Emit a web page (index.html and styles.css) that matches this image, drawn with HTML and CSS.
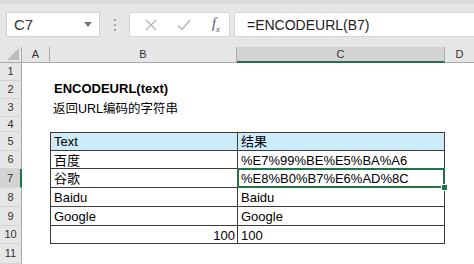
FILE: index.html
```html
<html>
<head>
    <title>ENCODEURL</title>
    <link rel="stylesheet" href="styles.css">
</head>
<body>
    <div class="toolbar">
        <div class="namebox">
            <span>C7</span>
            <svg class="caret" width="8" height="5" viewBox="0 0 8 5"><path d="M0 0h8L4 5z" fill="#777"/></svg>
        </div>
        <div class="dots"><i></i><i></i><i></i></div>
        <div class="fxbox">
            <svg width="12" height="12" viewBox="0 0 12 12"><path d="M1 1l10 10M11 1L1 11" stroke="#b4b4b4" stroke-width="1.3" fill="none"/></svg>
            <svg width="14" height="12" viewBox="0 0 14 12"><path d="M1 6.5l4 4L13 1" stroke="#b4b4b4" stroke-width="1.4" fill="none"/></svg>
            <span class="fx">f<sub>x</sub></span>
        </div>
        <div class="formula">=ENCODEURL(B7)</div>
    </div>

    <div class="sheet">
        <div class="corner"><svg width="12" height="12" viewBox="0 0 12 12"><path d="M12 0v12H0z" fill="#bdbdbd"/></svg></div>
        <div class="colhdr">A</div>
        <div class="colhdr">B</div>
        <div class="colhdr active">C</div>
        <div class="colhdr last">D</div>

        <div class="rowhdr">1</div><div></div><div></div><div></div><div></div>
        <div class="rowhdr">2</div><div></div><div class="title">ENCODEURL(text)</div><div></div><div></div>
        <div class="rowhdr">3</div><div></div><div class="note">返回URL编码的字符串</div><div></div><div></div>
        <div class="rowhdr">4</div><div></div><div></div><div></div><div></div>

        <div class="rowhdr">5</div><div></div>
        <div class="cell b head">Text</div><div class="cell c head">结果</div><div></div>

        <div class="rowhdr">6</div><div></div>
        <div class="cell b">百度</div><div class="cell c">%E7%99%BE%E5%BA%A6</div><div></div>

        <div class="rowhdr active">7</div><div></div>
        <div class="cell b">谷歌</div><div class="cell c selected">%E8%B0%B7%E6%AD%8C<span class="handle"></span></div><div></div>

        <div class="rowhdr">8</div><div></div>
        <div class="cell b">Baidu</div><div class="cell c">Baidu</div><div></div>

        <div class="rowhdr">9</div><div></div>
        <div class="cell b">Google</div><div class="cell c">Google</div><div></div>

        <div class="rowhdr">10</div><div></div>
        <div class="cell b num">100</div><div class="cell c">100</div><div></div>

        <div class="rowhdr">11</div><div></div><div></div><div></div><div></div>
    </div>
</body>
</html>
```

FILE: styles.css
```css
body {
    margin: 0;
    width: 474px;
    height: 264px;
    overflow: hidden;
    background: #ffffff;
    font-family: "Liberation Sans", "Noto Sans CJK SC", sans-serif;
}

.toolbar {
    height: 47px;
    box-sizing: border-box;
    padding: 12px 0 10px 6px;
    background: #e6e6e6;
    border-top: 4px solid #dadada;
    display: flex;
    align-items: stretch;
}

.namebox {
    width: 94px;
    box-sizing: border-box;
    background: white;
    border: 1px solid #d0d0d0;
    display: flex;
    align-items: center;
    justify-content: space-between;
    padding: 0 7px 0 7px;
    font-size: 15px;
    color: #333;
    margin-top: -4px;
}

.dots {
    width: 29px;
    display: flex;
    flex-direction: column;
    align-items: center;
    justify-content: center;
    gap: 3px;
    margin-top: -4px;
}

.dots i {
    width: 2px;
    height: 2px;
    background: #a8a8a8;
}

.fxbox {
    width: 101px;
    box-sizing: border-box;
    background: white;
    border: 1px solid #d6d6d6;
    display: flex;
    align-items: center;
    padding: 0 8px 0 15px;
    gap: 20px;
    margin-top: -4px;
}

.fx {
    font-family: "Liberation Serif", serif;
    font-style: italic;
    font-size: 14px;
    color: #555;
    margin-left: 1px;
}

.fx sub {
    font-size: 9px;
}

.formula {
    flex: 1;
    margin-left: 4px;
    background: white;
    border: 1px solid #d6d6d6;
    border-right: none;
    display: flex;
    align-items: center;
    padding-left: 12px;
    font-size: 14px;
    color: #222;
    margin-top: -4px;
}

.sheet {
    display: grid;
    grid-template-columns: 22px 28px 187px 208px 29px;
    grid-template-rows: 16px 18px 18px 18px 15px 19px 18px 19px 19px 19px 18px 20px;
    font-size: 13px;
    line-height: 15px;
}

.corner {
    background: #e6e6e6;
    border-right: 1px solid #ababab;
    border-bottom: 1px solid #ababab;
    display: flex;
    align-items: flex-end;
    justify-content: flex-end;
    padding: 0 2px 2px 0;
}

.colhdr {
    background: #e6e6e6;
    border-right: 1px solid #ababab;
    border-bottom: 1px solid #ababab;
    font-size: 11px;
    color: #333;
    display: flex;
    align-items: center;
    justify-content: center;
}

.colhdr.last {
    border-right: none;
}

.colhdr.active {
    background: #d3d3d3;
    border-bottom: 2px solid #217346;
}

.rowhdr {
    background: #e6e6e6;
    border-right: 1px solid #ababab;
    border-bottom: 1px solid #d4d4d4;
    font-size: 11px;
    color: #333;
    display: flex;
    align-items: center;
    justify-content: center;
}

.rowhdr.active {
    background: #d3d3d3;
    border-right: 2px solid #217346;
}

.title {
    font-weight: bold;
    padding: 0 0 0 4px;
}

.note {
    padding: 3px 0 0 3px;
    font-size: 12.5px;
}

.cell {
    position: relative;
    border-left: 1px solid #3c3c3c;
    border-bottom: 1px solid #3c3c3c;
    padding: 2px 0 0 3px;
    white-space: nowrap;
}

.cell.c {
    border-right: 1px solid #3c3c3c;
}

.cell.head {
    background: #cdebf8;
    border-top: 1px solid #3c3c3c;
    padding-top: 1px;
}

.cell.num {
    text-align: right;
    padding-right: 2px;
}

.selected::after {
    content: "";
    position: absolute;
    left: -1px;
    top: -1px;
    right: -1px;
    bottom: -1px;
    border: 2px solid #217346;
}

.handle {
    position: absolute;
    right: -4px;
    bottom: -4px;
    width: 5px;
    height: 5px;
    background: #217346;
    border: 1px solid white;
    z-index: 1;
}
```
